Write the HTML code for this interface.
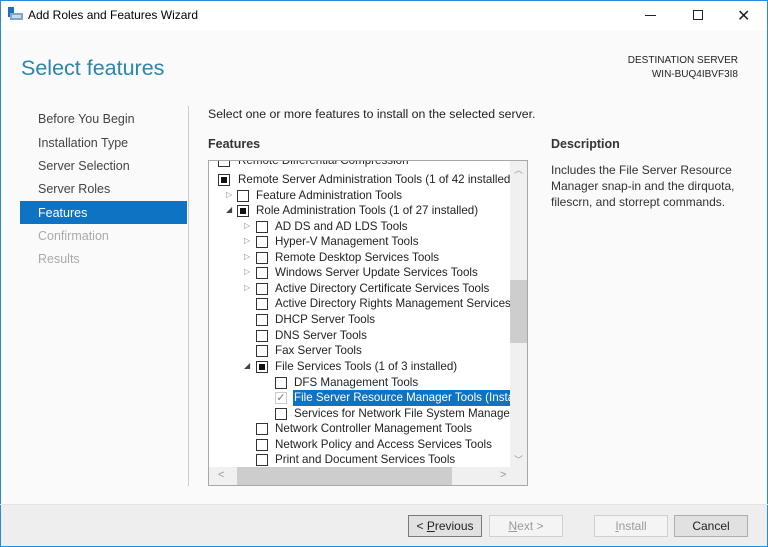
<!DOCTYPE html>
<html><head><style>
*{margin:0;padding:0;box-sizing:border-box}
body{width:768px;height:547px;overflow:hidden;font-family:"Liberation Sans",sans-serif;font-size:12px;color:#222;background:#fafafa;position:relative}
.a{position:absolute;white-space:nowrap}
.nav{position:absolute;left:38px;color:#444;font-size:12.5px}
.cb{position:absolute;width:12px;height:12px;border:1px solid #333;background:#fff}
.cb.f::after{content:"";position:absolute;left:2px;top:2px;width:6px;height:6px;background:#111}
.ar{position:absolute;font-size:8px;color:#888}
.btn{position:absolute;top:515px;height:22px;border:1px solid #adadad;background:#e1e1e1;text-align:center;line-height:20px;font-size:12px}
.dis{background:#f4f4f4;border-color:#d0d0d0;color:#9a9a9a}
.lst .a{font-size:11.6px}
</style></head><body>
<div class="a" style="left:0;top:0;width:768px;height:30px;background:#fff"></div>
<div class="a" style="left:0;top:0;width:768px;height:547px;border:1px solid #2b8ad8"></div>
<svg class="a" style="left:7px;top:7px" width="17" height="14"><rect x="1" y="0" width="6" height="10" fill="#1e6fbf"/><rect x="3" y="6" width="13" height="7" fill="#7aa6cf"/><rect x="5" y="8" width="9" height="3" fill="#c8dbee"/></svg>
<div class="a" style="left:28px;top:8px;font-size:12px;color:#000">Add Roles and Features Wizard</div>
<div class="a" style="left:645px;top:15px;width:11px;height:1px;background:#222"></div>
<div class="a" style="left:693px;top:10px;width:10px;height:10px;border:1px solid #222"></div>
<div class="a" style="left:737px;top:6px;font-size:16px;color:#222">✕</div>
<div class="a" style="left:21px;top:56px;font-size:21.5px;color:#2a85b0">Select features</div>
<div class="a" style="right:30px;top:54px;font-size:10px;text-align:right;line-height:14px">DESTINATION SERVER<br>WIN-BUQ4IBVF3I8</div>
<div class="nav" style="top:112px">Before You Begin</div>
<div class="nav" style="top:136px">Installation Type</div>
<div class="nav" style="top:159px">Server Selection</div>
<div class="nav" style="top:182px">Server Roles</div>
<div class="a" style="left:20px;top:201px;width:167px;height:23px;background:#0f73c4"></div>
<div class="nav" style="top:206px;color:#fff">Features</div>
<div class="nav" style="top:229px;color:#aaa">Confirmation</div>
<div class="nav" style="top:252px;color:#aaa">Results</div>
<div class="a" style="left:188px;top:106px;width:1px;height:380px;background:#ccc"></div>
<div class="a" style="left:208px;top:107px;font-size:12.3px">Select one or more features to install on the selected server.</div>
<div class="a" style="left:208px;top:137px;font-weight:bold;font-size:12.5px;color:#333">Features</div>
<div class="a" style="left:551px;top:137px;font-weight:bold;font-size:12.5px;color:#333">Description</div>
<div class="a" style="left:551px;top:162px;font-size:12px;line-height:16px;color:#333">Includes the File Server Resource<br>Manager snap-in and the dirquota,<br>filescrn, and storrept commands.</div>
<div class="a lst" style="left:208px;top:160px;width:320px;height:326px;border:1px solid #a8a8a8;background:#fff;overflow:hidden">
<div style="position:absolute;left:0;top:0;width:301px;height:305px;overflow:hidden">
<div class="cb" style="left:9px;top:-6px"></div><div class="a" style="left:29px;top:-7px">Remote Differential Compression</div>
<div class="cb f" style="left:9px;top:13px"></div><div class="a" style="left:29px;top:12px">Remote Server Administration Tools (1 of 42 installed)</div>
<div class="ar" style="left:17px;top:29px">▷</div><div class="cb" style="left:28px;top:29px"></div><div class="a" style="left:47px;top:28px">Feature Administration Tools</div>
<div class="ar" style="left:17px;top:44px;color:#444">◢</div><div class="cb f" style="left:28px;top:44px"></div><div class="a" style="left:47px;top:43px">Role Administration Tools (1 of 27 installed)</div>
<div class="ar" style="left:35px;top:60px">▷</div><div class="cb" style="left:47px;top:60px"></div><div class="a" style="left:66px;top:59px">AD DS and AD LDS Tools</div>
<div class="ar" style="left:35px;top:75px">▷</div><div class="cb" style="left:47px;top:75px"></div><div class="a" style="left:66px;top:74px">Hyper-V Management Tools</div>
<div class="ar" style="left:35px;top:91px">▷</div><div class="cb" style="left:47px;top:91px"></div><div class="a" style="left:66px;top:90px">Remote Desktop Services Tools</div>
<div class="ar" style="left:35px;top:106px">▷</div><div class="cb" style="left:47px;top:106px"></div><div class="a" style="left:66px;top:105px">Windows Server Update Services Tools</div>
<div class="ar" style="left:35px;top:122px">▷</div><div class="cb" style="left:47px;top:122px"></div><div class="a" style="left:66px;top:121px">Active Directory Certificate Services Tools</div>
<div class="cb" style="left:47px;top:137px"></div><div class="a" style="left:66px;top:136px">Active Directory Rights Management Services Tools</div>
<div class="cb" style="left:47px;top:153px"></div><div class="a" style="left:66px;top:152px">DHCP Server Tools</div>
<div class="cb" style="left:47px;top:169px"></div><div class="a" style="left:66px;top:168px">DNS Server Tools</div>
<div class="cb" style="left:47px;top:184px"></div><div class="a" style="left:66px;top:183px">Fax Server Tools</div>
<div class="ar" style="left:35px;top:200px;color:#444">◢</div><div class="cb f" style="left:47px;top:200px"></div><div class="a" style="left:66px;top:199px">File Services Tools (1 of 3 installed)</div>
<div class="cb" style="left:66px;top:216px"></div><div class="a" style="left:85px;top:215px">DFS Management Tools</div>
<div class="cb" style="left:66px;top:231px;border-color:#ccc;color:#777;font-size:11px;line-height:10px;text-align:center">✓</div><div class="a" style="left:84px;top:229px;width:220px;height:16px;background:#0f73c4"></div><div class="a" style="left:85px;top:230px;color:#fff">File Server Resource Manager Tools (Installed)</div>
<div class="cb" style="left:66px;top:247px"></div><div class="a" style="left:85px;top:246px">Services for Network File System Management Tools</div>
<div class="cb" style="left:47px;top:262px"></div><div class="a" style="left:66px;top:261px">Network Controller Management Tools</div>
<div class="cb" style="left:47px;top:278px"></div><div class="a" style="left:66px;top:277px">Network Policy and Access Services Tools</div>
<div class="cb" style="left:47px;top:293px"></div><div class="a" style="left:66px;top:292px">Print and Document Services Tools</div>
</div>
<div class="a" style="left:301px;top:0;width:17px;height:306px;background:#f0f0f0"></div>
<div class="a" style="left:301px;top:119px;width:17px;height:63px;background:#cdcdcd"></div>
<div class="a" style="left:305px;top:2px;font-size:9px;color:#999">︿</div>
<div class="a" style="left:305px;top:292px;font-size:9px;color:#999">﹀</div>
<div class="a" style="left:0;top:306px;width:318px;height:18px;background:#f0f0f0"></div>
<div class="a" style="left:28px;top:306px;width:215px;height:18px;background:#cdcdcd"></div>
<div class="a" style="left:9px;top:308px;font-size:11px;color:#999">&lt;</div>
<div class="a" style="left:291px;top:308px;font-size:11px;color:#999">&gt;</div>
</div>
<div class="a" style="left:0;top:504px;width:768px;height:1px;background:#e4e4e4"></div>
<div class="a" style="left:1px;top:505px;width:766px;height:41px;background:#eeeeee"></div>
<div class="btn" style="left:408px;width:74px;border-color:#7a7a7a">&lt; <u>P</u>revious</div>
<div class="btn dis" style="left:489px;width:74px"><u>N</u>ext &gt;</div>
<div class="btn dis" style="left:594px;width:74px"><u>I</u>nstall</div>
<div class="btn" style="left:674px;width:74px">Cancel</div>
</body></html>
